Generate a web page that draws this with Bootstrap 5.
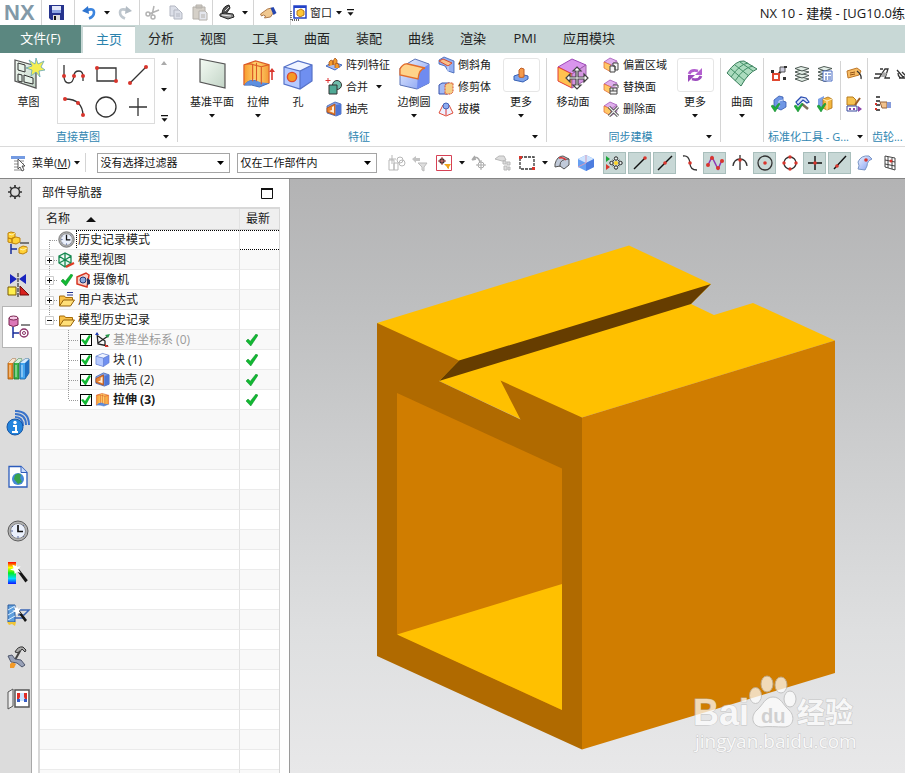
<!DOCTYPE html>
<html lang="zh-CN">
<head>
<meta charset="utf-8">
<meta name="viewport" content="width=device-width, initial-scale=1">
<title>NX 10 - 建模</title>
<link href="https://cdn.jsdelivr.net/npm/bootstrap@5.3.0/dist/css/bootstrap.min.css" rel="stylesheet">
<style>
body{font:11px/16px "Open Sans","Noto Sans CJK SC",sans-serif;color:#1a1a1a;background:#fff}
svg{display:block;flex:none;overflow:visible}
button{border:0;background:none;padding:0;color:inherit;font:inherit;line-height:16px;white-space:nowrap}
.ln{fill:none;stroke:#333;stroke-width:1.3}
.rd{fill:#d8352c}
.vsep{width:1px;background:#d4d4d4;flex:none;align-self:stretch}
.qbar{height:25px}
.logo{width:41px;padding-left:4px;font:bold 22px/26px "Liberation Sans",sans-serif;color:#8299a8}
.b24,.b28,.b25,.car{display:flex;align-items:center;justify-content:center;flex:none}
.b24{width:24px;height:24px}.b28{width:28px;height:24px}.b25{width:25px;height:24px}
.car{width:8px;height:16px}
.car.wide{width:11px}
.wintitle{font-size:13px}
.tabs{height:28px;background:#c8d8d6;font-size:13px}
.tabs a{color:#222;text-decoration:none;width:52px;text-align:center;line-height:27px;flex:none}
.tabs .file{width:81px;background:#5b8780;color:#fff;margin-right:2px;line-height:27px}
.tabs .on{background:#fff;color:#2a82ad;border-top:1px solid #b9c4c3;margin-top:1px;line-height:25px}
.tabs .apps{width:76px}
.ribbon{height:94px;border-bottom:1px solid #dadada}
.grp{display:flex;flex-direction:column;flex:none}
.grp>.body{height:75px;display:flex}
.grp>.cap{height:18px;color:#2f86b1;display:flex;align-items:center;justify-content:center;padding:0 8px;line-height:18px}
.ribbon>.vsep{margin:5px 0 4px}
.big{width:40px;padding-top:5px;display:flex;flex-direction:column;align-items:center}
.big.w52{width:52px}.big.w57{width:57px}.big.w42{width:42px}
.big.etc{margin:0 5px 0 10px}
.big>svg:first-child{width:32px;height:32px;margin-bottom:4px}
.big .dn{margin-top:4px}
.more{width:37px;height:34px;border:1px solid #e6e6e6;border-radius:3px;display:flex;align-items:center;justify-content:center;margin-bottom:2px}
.sm{display:flex;flex-direction:column;padding-top:1px}
.sm button{height:22px;display:flex;align-items:center;gap:4px}
.gallery{width:98px;height:66px;margin-top:5px;border:1px solid #dcdcdc;display:grid;grid-template-columns:repeat(3,1fr)}
.gallery button,.icons button{display:flex;align-items:center;justify-content:center}
.gscroll{width:18px;padding:8px 0 6px;display:flex;flex-direction:column;justify-content:space-between;align-items:center}
.icons{display:grid;grid-template-columns:repeat(3,23px);grid-template-rows:30px 30px;padding:6px 0 0 3px}
.icons.one{grid-template-columns:23px;padding-left:1px}
.selbar{height:32px;border-bottom:1px solid #858585}
.selbar .vsep{margin:6px 11px 6px 5px}
.selbar select{flex:none;width:133px;margin-right:7px;height:20px;border:1px solid #a5a5a5;border-radius:0;font-size:11px;line-height:18px;padding:0 20px 0 2px;color:#111;background:#fff url("data:image/svg+xml,%3Csvg xmlns='http://www.w3.org/2000/svg' width='7' height='4'%3E%3Cpath d='M0 0h7L3.5 4z'/%3E%3C/svg%3E") no-repeat right 5px center;appearance:none}
.selbar select.scope{width:140px}
.tg{width:23px;height:22px;background:#c8d8d6;border:1px solid #a9bfbc;display:flex;align-items:center;justify-content:center}
.side{width:32px;background:#dcdcdc;border-right:1px solid #a8a8a8}
.side button{height:42px;width:32px;flex:none;display:flex;align-items:center;justify-content:center;padding-left:4px}
.side .gear{height:26px;margin-bottom:17px;padding:0 2px 0 0}
.side .act{background:#fff;border:1px solid #b5b5b5;border-right:0;margin-left:2px;width:30px;padding-left:2px}
.side .gapt{margin-top:12px}
.nav-panel{width:258px;border-right:1px solid #9a9a9a}
.nav-panel h2{font-size:12px;line-height:28px;height:28px;margin:0;padding-left:10px;font-weight:400}
.treebox{margin:0 9px 0 6px;border:1px solid #d8d8d8;border-width:2px 1px 0 2px;font-size:12px}
.tree{width:100%;table-layout:fixed;border-collapse:separate;border-spacing:0}
.tree th{height:21px;background:#efefef;font-weight:400;border-bottom:1px solid #cfcfcf;padding:0 6px;line-height:20px}
.tree td{height:20px;padding:0;border-bottom:1px solid #ebebeb;line-height:19px;overflow:hidden;white-space:nowrap}
.tree th:first-child,.tree td:first-child{border-right:1px solid #e2e2e2}
.tree tbody tr:nth-child(even) td{background:#f9f9f9}
.tree .cell{display:flex;align-items:center;height:19px}
.tree .gut{width:18px;height:20px;margin-bottom:-1px}
.tree .gut.deep{width:38px}
.tree .dot{fill:none;stroke:#999;stroke-dasharray:1 1}
.tree .tx{padding-left:3px}
.tree .ok{margin:0 3px}
.tree td .new{margin-left:6px}
.tree .dim{color:#9b9b9b}
.tree .focus .tx{border:1px dotted #000;border-right:0;padding-left:1px;flex:1;height:20px;margin-left:1px;line-height:18px}
.tree .focus td:last-child{border-top:1px dotted #000;border-bottom:1px dotted #000}
.tree input{appearance:none;width:12px;height:12px;border:1px solid #000;margin:0 3px 0 2px;flex:none;background:#fff}
.tree input:checked{background:#fff url("data:image/svg+xml,%3Csvg xmlns='http://www.w3.org/2000/svg' viewBox='0 0 10 10'%3E%3Cpath d='M0 5l2-1 2 2 4-6 2 1-5 9H4z' fill='%2312b833'/%3E%3C/svg%3E") center/10px no-repeat}
.tree label{padding-left:3px}
.view{background:linear-gradient(#b3b3b4,#bdbebf 20%,#cecfd0 48%,#dedfe0 76%,#e8e8e9)}
.view svg{width:100%;height:100%}
.wm text{fill:#fff;stroke:#b9b9b9;stroke-width:1;paint-order:stroke}
</style>
<script src="https://cdn.jsdelivr.net/npm/bootstrap@5.3.0/dist/js/bootstrap.bundle.min.js"></script>
</head>
<body class="vh-100 overflow-hidden d-flex flex-column">
<svg width="0" height="0" class="position-absolute" aria-hidden="true">
<defs>
<linearGradient id="gb" x2="1" y2="1"><stop stop-color="#eef3ff"/><stop offset="1" stop-color="#7e9bf2"/></linearGradient>
<linearGradient id="gp" x2="1" y2="1"><stop stop-color="#f4fbf4"/><stop offset="1" stop-color="#c2d4c6"/></linearGradient>
<linearGradient id="go" x2="1" y2="0"><stop stop-color="#f79a2c"/><stop offset=".5" stop-color="#ffd873"/><stop offset="1" stop-color="#f49a35"/></linearGradient>
<linearGradient id="gr" x2="0" y2="1"><stop stop-color="red"/><stop offset=".25" stop-color="#ff0"/><stop offset=".5" stop-color="#0e2"/><stop offset=".75" stop-color="#0df"/><stop offset="1" stop-color="#11f"/></linearGradient>
<symbol id="dn" viewBox="0 0 6 4"><path d="M0 0h6L3 3.5z" fill="#111"/></symbol>
<symbol id="dnbar" viewBox="0 0 7 7"><path d="M0 0h7v1.3H0zM.5 3.3h6L3.500 6.800z" fill="#111"/></symbol>
<symbol id="ck" viewBox="0 0 12 12"><path d="M0 7l2-2 2.300 2.200L10 0l2 1.200L4.800 12z" fill="#12b833" stroke="#0a8d25" stroke-width=".5"/></symbol>
<symbol id="cube" viewBox="0 0 16 16"><path d="M1 4.500l7-3 7 2v8l-6 4-8-2.500z" fill="#6f8ff0"/><path d="M1 4.500l8 2v9l-8-2.500z" fill="#b5c9ff"/><path d="M1 4.500l7-3 7 2-6 3z" fill="#f0f4ff"/><path d="M1 4.500l7-3 7 2v8l-6 4-8-2.500zM1 4.500l8 2 6-3M9 6.500v9" fill="none" stroke="#5672c8" stroke-width=".6"/></symbol>
<symbol id="ext" viewBox="0 0 30 32"><path d="M2 28Q6 22 12 23h8l8 3-10 4q-8-3-16-2z" fill="#5d8fe0" stroke="#3d6ab8"/><path d="M2 7l12-4 14 4v19l-9-1-7-3q-7 1-10 6z" fill="url(#go)"/><path d="M2 28V7l12-4 14 4v19M2 7q6-2 10 0l8 2 8-2M11 7v17M15 5v19M20 9v18" fill="none" stroke="#dc5a26" stroke-width="1.200"/></symbol>
<symbol id="shell" viewBox="0 0 16 16"><path d="M1 5l8-4 6 2v10l-5 2-9-3z" fill="#86a5ec" stroke="#3d5fae" stroke-width=".8"/><path d="M1 7l8-4v11l-8-3z" fill="#e9812d" stroke="#a94b16" stroke-width=".8"/><path d="M3 10l3-1V6l2-1v7z" fill="#fff0dc"/><path d="M10 4l5-1v10l-5 2z" fill="#4f76d5"/></symbol>
<symbol id="fold" viewBox="0 0 16 16"><path d="M1 14V4h5l1 1.500h7V8" fill="#f9c24a" stroke="#a56b08"/><path d="M1 14L5 8h11l-4 6z" fill="#ffdf78" stroke="#94610a"/></symbol>
<symbol id="face" viewBox="0 0 16 16"><path d="M1 5l6-4 7 3-6 4z" fill="#dfb0ec" stroke="#a557bb" stroke-width=".8"/><path d="M1 5l7 3v7l-7-4z" fill="#ffc867" stroke="#e4703b" stroke-width=".8"/><path d="M8 8l6-4v7l-6 4z" fill="#d9a3e3" stroke="#a878b1" stroke-width=".6"/></symbol>
<symbol id="clock" viewBox="0 0 22 22"><circle cx="11" cy="11" r="10" fill="#b2b2b2" stroke="#5d5d5d"/><circle cx="11" cy="11" r="7.500" fill="#eaf0fc" stroke="#8a8a8a"/><path d="M11 5v6.500h5" fill="none" stroke="#111" stroke-width="1.700"/><path d="M11 16v2M4 11h2M16 16l1 1M5 16l1-1M5 6l1 1M16 6l1-1" stroke="#56669a"/></symbol>
<symbol id="wand" viewBox="0 0 16 16"><path d="M5 5l2-1 8 10-2 2z" fill="#161616"/><path d="M5 0l1 3 3-1-2 3 2 3-3-1-2 2-.5-3L0 5l3-1-1-3 3 1z" fill="#fff"/></symbol>
<symbol id="layers" viewBox="0 0 16 16"><g fill="#e4efe8" stroke="#3d4a44" stroke-width=".9"><path d="M1 13l6-2 8 2-7 2.500z"/><path d="M1 9.500l6-2 8 2-7 2.500z"/><path d="M1 6l6-2 8 2-7 2.500z"/><path d="M1 2.500l6-2 8 2L8 5z"/></g></symbol>
<symbol id="tick" viewBox="0 0 16 16"><path d="M0 10l2-1 2 2.500L8 7l1 1-5 8z" fill="#1fae3b" stroke="#118229" stroke-width=".5"/></symbol>
<symbol id="hand" viewBox="0 0 16 12"><path d="M0 7l7-5 4-1 3 3-4 6-6 1 1-2-2-1-2 1z" fill="#f0c890" stroke="#9c6130" stroke-width=".8"/><path d="M10 1l3-1 3 6-3 2z" fill="#2445ae"/></symbol>
</defs>
</svg>

<header class="qbar d-flex align-items-center flex-shrink-0">
<div class="logo flex-shrink-0">NX</div><span class="vsep"></span>
<button class="b28 me-1" aria-label="保存"><svg width="15" height="15"><path d="M0 0h15v15H2l-2-2z" fill="#26348e"/><path d="M3 1h9v7H3z" fill="#e4e8fa"/><path d="M3 5h9v3H3z" fill="#8da6e5"/><path d="M4 10h7v5H4z" fill="#ddd"/><path d="M5 11h2v4H5z" fill="#111"/></svg></button><span class="vsep"></span>
<button class="b28" aria-label="撤消"><svg width="14" height="15"><path d="M4 5.500q8-3 8 2 0 4-5 6" fill="none" stroke="#3b84df" stroke-width="2.600"/><path d="M0 6l6-5 1 8z" fill="#2f75d0"/></svg></button><button class="car" aria-label="撤消列表"><svg width="6" height="4"><use href="#dn"/></svg></button>
<button class="b28" aria-label="重做"><svg width="14" height="15"><path d="M10 5.500q-8-3-8 2 0 4 5 6" fill="none" stroke="#c0c8cf" stroke-width="2.600"/><path d="M14 6L8 1 7 9z" fill="#b3bcc4"/></svg></button><span class="vsep"></span>
<button class="b24" aria-label="剪切"><svg width="15" height="15" fill="none" stroke="#b3b3b3" stroke-width="1.500"><path d="M9 1L7 10M14 5L4 9"/><circle cx="3" cy="9" r="2"/><circle cx="8" cy="12" r="2"/></svg></button>
<button class="b24" aria-label="复制"><svg width="14" height="15" fill="#dcdfe8" stroke="#b3b7c2"><path d="M1 1h5l3 3v7H1z"/><path d="M5 5h5l3 3v6H5z"/><path d="M7 9h4M7 11h4"/></svg></button>
<button class="b24" aria-label="粘贴"><svg width="16" height="16" fill="#d5d0c8" stroke="#b4b0aa"><path d="M1 2h12v12H1zM4 0h6v3H4z"/><path d="M7 6h6l2 2v7H7z" fill="#e4e6ed"/><path d="M9 10h4M9 12h4"/></svg></button><span class="vsep"></span>
<button class="b28" aria-label="命令查找器"><svg width="16" height="15"><path d="M3 8Q4 1 10 0l1 3-4 6z" fill="#555" stroke="#222"/><path d="M6 6l4-4" stroke="#ddd"/><path d="M1 9l5-1 8 1 1 3-6 2-8-3z" fill="#888" stroke="#222"/><path d="M3 10l9 1" stroke="#eee"/></svg></button><button class="car me-1" aria-label="更多命令"><svg width="6" height="4"><use href="#dn"/></svg></button><span class="vsep"></span>
<button class="b28 me-2" aria-label="触控"><svg width="17" height="12"><use href="#hand"/></svg></button><span class="vsep"></span>
<button class="d-flex align-items-center"><svg width="15" height="16" class="me-1"><path d="M3 1h12v12H3z" fill="#fff" stroke="#2342c8" stroke-width="1.500"/><path d="M3 1h12v2H3z" fill="#2342c8"/><path d="M0 6v9h9" class="ln" stroke-dasharray="1 1"/><path d="M6 6l4-2 3 2v4l-4 2-3-2z" fill="#ffc636" stroke="#b47616"/></svg>窗口<svg width="6" height="4" class="mx-1"><use href="#dn"/></svg></button><button class="car" aria-label="自定义"><svg width="7" height="7"><use href="#dnbar"/></svg></button>
<div class="wintitle text-nowrap ms-auto">NX 10 - 建模 - [UG10.0练</div>
</header>

<nav class="tabs d-flex flex-shrink-0 overflow-hidden">
<a href="#" class="file">文件(F)</a><a href="#" class="on">主页</a><a href="#">分析</a><a href="#">视图</a><a href="#">工具</a><a href="#">曲面</a><a href="#">装配</a><a href="#">曲线</a><a href="#">渲染</a><a href="#">PMI</a><a href="#" class="apps">应用模块</a>
</nav>

<section class="ribbon d-flex flex-shrink-0 overflow-hidden">
<div class="grp"><div class="body">
<button class="big w57"><svg viewBox="0 0 32 32"><path d="M2 2l21 6v22L2 23z" fill="url(#gp)" stroke="#555" stroke-width="1.300"/><path d="M5 5l7 2v7l-7-2zM5 16l4 1v7l-4-1zM11 17l9 3v6l-9-2z" fill="#e7f3ea" stroke="#333"/><path d="M23 0l2 6 6-3-3 6 4 3-6 1 1 6-4-5-5 4 1-6-6-2 6-2-3-6 6 4z" fill="#f5ee51" stroke="#62a6b8" stroke-width=".8"/></svg>草图</button>
<div class="gallery">
<button aria-label="轮廓"><svg width="22" height="20"><path d="M1 0v11q0 7 5 7 4 0 5-7 0-5 5-5 4 0 4 6v4" class="ln"/><g class="rd"><circle cx="1" cy="11" r="2"/><circle cx="11" cy="11" r="2"/><circle cx="20" cy="11" r="2"/></g></svg></button>
<button aria-label="矩形"><svg width="22" height="18"><path d="M2 2h19v13H2z" class="ln"/><g class="rd"><circle cx="2" cy="2" r="2"/><circle cx="21" cy="15" r="2"/></g></svg></button>
<button aria-label="直线"><svg width="20" height="18"><path d="M2 17L18 1" class="ln"/><g class="rd"><circle cx="2" cy="17" r="2"/><circle cx="18" cy="1" r="2"/></g></svg></button>
<button aria-label="圆弧"><svg width="22" height="20"><path d="M2 2q18 0 18 17" class="ln"/><g class="rd"><circle cx="2" cy="2" r="2"/><circle cx="15" cy="6" r="2"/><circle cx="20" cy="18" r="2"/></g></svg></button>
<button aria-label="圆"><svg width="22" height="22"><circle cx="11" cy="11" r="10" class="ln"/></svg></button>
<button aria-label="点"><svg width="18" height="18"><path d="M9 0v18M0 9h18" class="ln"/></svg></button>
</div>
<div class="gscroll"><button class="lh-1" aria-label="上"><svg width="6" height="4"><path d="M0 4h6L3 0z" fill="#aaa"/></svg></button><button class="lh-1" aria-label="下"><svg width="6" height="4"><use href="#dn"/></svg></button><button class="lh-1" aria-label="全部"><svg width="7" height="7"><use href="#dnbar"/></svg></button></div>
<span class="pe-1"></span></div>
<div class="cap justify-content-between ps-0"><span class="ps-5 ms-2">直接草图</span><svg width="6" height="4"><use href="#dn"/></svg></div></div>
<span class="vsep"></span>

<div class="grp"><div class="body ps-2">
<button class="big w52"><svg viewBox="0 0 32 32"><path d="M4 1l25 5v24L4 24z" fill="url(#gp)" stroke="#555" stroke-width="1.200"/></svg>基准平面<svg width="6" height="4" class="dn"><use href="#dn"/></svg></button>
<button class="big"><svg viewBox="0 0 32 32"><use href="#ext" width="29" height="31"/><path d="M30 22V13" stroke="#d92820" stroke-width="1.500"/><path d="M27 14l3-4 3 4z" class="rd"/></svg>拉伸<svg width="6" height="4" class="dn"><use href="#dn"/></svg></button>
<button class="big"><svg viewBox="0 0 16 16"><use href="#cube"/><circle cx="5" cy="9.500" r="2.300" fill="#f59a25" stroke="#dc4a30" stroke-width=".7"/></svg>孔</button>
<div class="sm ps-2">
<button><svg width="16" height="16" viewBox="0 0 16 16"><path d="M0 9l7-4 9 3-7 5z" fill="#aabdf0" stroke="#446abe"/><path d="M3 9V5l2-2 2 1v4M7 8V4l2-3 2 2v4M9 11V7l2-1 2 2v3" fill="#f59b2b" stroke="#a55520" stroke-width=".8"/></svg>阵列特征</button>
<button><svg width="16" height="16" viewBox="0 0 16 16"><circle cx="11" cy="6" r="4.500" fill="#70bdab" stroke="#333"/><path d="M3 6h8v9H3z" fill="#50a995" stroke="#333"/><path d="M2-1v5M-.5 1.500h5" stroke="#d33"/></svg>合并<svg width="6" height="4" class="ms-1"><use href="#dn"/></svg></button>
<button><svg width="16" height="16"><use href="#shell"/></svg>抽壳</button></div>
<button class="big ms-1"><svg viewBox="0 0 32 32"><path d="M2 10L17 1l14 5v19l-12 6-17-4z" fill="url(#gb)" stroke="#5b74b8"/><path d="M20 14l11-8v19l-12 6z" fill="#6f8bf0"/><path d="M2 17V11q3-6 8-5l17 4q-6 1-7 11z" fill="#ffd38a" stroke="#e26c2b" stroke-width="1.300"/></svg>边倒圆<svg width="6" height="4" class="dn"><use href="#dn"/></svg></button>
<div class="sm ps-1">
<button><svg width="16" height="16" viewBox="0 0 16 16"><path d="M1 3l5-3 10 4v12l-6-2-3-5-6-2z" fill="#94aff0" stroke="#3b60b2" stroke-width=".8"/><path d="M1 4l4-2 9 4-4 3z" fill="#f9c189" stroke="#d74a30"/><path d="M10 9v6" stroke="#d9e4ff"/></svg>倒斜角</button>
<button><svg width="16" height="16" viewBox="0 0 16 16"><path d="M1 6l3-2h8v9l-2 2H1z" fill="#a4baf5" stroke="#3653ac"/><path d="M7 6l3-2h5v9l-2 2H7z" fill="#f4cf87" stroke="#d74a30" stroke-dasharray="2 1"/></svg>修剪体</button>
<button><svg width="16" height="16" viewBox="0 0 16 16"><path d="M1 12l4-8h6l4 8-7 3z" fill="#eef1ff" stroke="#e04c38"/><path d="M8 3v11" stroke="#d33"/><circle cx="8" cy="5" r="3" fill="#8eacef" stroke="#4463ba"/></svg>拔模</button></div>
<button class="big etc"><span class="more"><svg width="16" height="16" viewBox="0 0 16 16"><path d="M1 9l6-2 8 2v3l-5 3-9-2z" fill="#7ea3ea" stroke="#3560b5"/><path d="M6 10V3l2-2 3 1v8q-3 1-5 0z" fill="#f49a4b" stroke="#c25e25"/></svg></span>更多<svg width="6" height="4" class="dn"><use href="#dn"/></svg></button></div>
<div class="cap"><span class="ms-auto">特征</span><svg width="6" height="4" class="ms-auto"><use href="#dn"/></svg></div></div>
<span class="vsep"></span>

<div class="grp"><div class="body">
<button class="big w52"><svg viewBox="0 0 32 32"><path d="M1 9l14-8 14 6-14 9z" fill="#d995ec" stroke="#9e49ba"/><path d="M1 9l14 7v14L1 23z" fill="#ffc14f" stroke="#e23c35"/><path d="M15 16l14-9v15l-14 8z" fill="#d496e1" stroke="#9e61aa"/><path d="M20 9l4 4h-3v6h6v-3l4 4-4 4v-3h-6v6h3l-4 4-4-4h3v-6h-6v3l-4-4 4-4v3h6v-6h-3z" fill="#fff" stroke="#444" stroke-width="1.200"/></svg>移动面</button>
<div class="sm ps-1">
<button><svg width="16" height="16" viewBox="0 0 16 16"><use href="#face"/><path d="M7 9h5v6H7zM10 6h5v7h-3V9h-2z" fill="#f4f4f4" stroke="#444"/></svg>偏置区域</button>
<button><svg width="16" height="16" viewBox="0 0 16 16"><use href="#face"/><path d="M7 9h7v6H7zM7 12h7M10 6h5v3M10 9v3" fill="#f4f4f4" stroke="#444"/></svg>替换面</button>
<button><svg width="16" height="16" viewBox="0 0 16 16"><use href="#face"/><path d="M6 6l9 9M15 6l-9 9" stroke="#444" stroke-width="3"/><path d="M6 6l9 9M15 6l-9 9" stroke="#eee" stroke-width="1.200"/></svg>删除面</button></div>
<button class="big etc ms-2"><span class="more"><svg width="16" height="14"><path d="M2 6q2-5 9-3" fill="none" stroke="#b35fcf" stroke-width="2.800"/><path d="M8 7h7V0z" fill="#b35fcf"/><path d="M14 8q-2 5-9 3" fill="none" stroke="#9c4bbd" stroke-width="2.800"/><path d="M8 7H1v7z" fill="#9c4bbd"/></svg></span>更多<svg width="6" height="4" class="dn"><use href="#dn"/></svg></button></div>
<div class="cap"><span class="ms-auto">同步建模</span><svg width="6" height="4" class="ms-auto"><use href="#dn"/></svg></div></div>
<span class="vsep"></span>

<div class="grp"><div class="body"><button class="big w42"><svg viewBox="0 0 32 32"><path d="M1 15Q10 2 18 3l13 8q-9 4-16 17z" fill="#acdcbf" stroke="#397e5c"/><path d="M5 11l14 12M9 7l14 11M14 4l13 9M5 19Q14 6 22 5M9 23Q18 9 27 8" fill="none" stroke="#438f67"/></svg>曲面<svg width="6" height="4" class="dn"><use href="#dn"/></svg></button></div></div>
<span class="vsep"></span>

<div class="grp"><div class="body">
<div class="icons">
<button aria-label="装配关系"><svg width="16" height="16" viewBox="0 0 16 16"><path d="M5 11L11 4" stroke="#222" stroke-width="2"/><path d="M2 8h6v6H2z" fill="#fff" stroke="#e04931" stroke-width="2"/><path d="M9 1h5v5H9z" fill="#ccd" stroke="#555"/><path d="M0 4h3v3H0zM12 11h3v3h-3zM13 0h3v2h-3z" fill="#333"/></svg></button>
<button aria-label="图层"><svg width="16" height="16"><use href="#layers"/></svg></button>
<button aria-label="图层表"><svg width="16" height="16" viewBox="0 0 16 16"><use href="#layers"/><path d="M6 5h9v10H6z" fill="#fff" stroke="#4d6fc5"/><path d="M8 8h2M11 8h3M8 11h2M11 11h3M8 13h2M11 13h3" stroke="#315abd"/></svg></button>
<button aria-label="检查"><svg width="16" height="16" viewBox="0 0 16 16"><path d="M3 4l5-4 4 1v4l3 1v5l-5 3-7-3z" fill="#6f96e4" stroke="#3559ae" stroke-width=".8"/><path d="M8 5l4-1M8 5v6" stroke="#d4e0fa"/><use href="#tick"/></svg></button>
<button aria-label="检查工具"><svg width="16" height="16" viewBox="0 0 16 16"><path d="M2 6l5-5 5 1 3 4-2 1-4-3-5 5z" fill="#dfe7fb" stroke="#284bb0" stroke-width="1.200"/><path d="M8 8l6 5" stroke="#807159" stroke-width="2.500"/><use href="#tick"/></svg></button>
<button aria-label="部件检查"><svg width="16" height="16" viewBox="0 0 16 16"><path d="M1 3l6-3v10l-6 2z" fill="#7fa2e6"/><path d="M6 3l5-2 4 2v9l-5 2-4-2z" fill="#f4b63e" stroke="#aa6e18" stroke-width=".8"/><path d="M6 3l4 2 5-2M10 5v9" fill="none" stroke="#fff0c0"/><use href="#tick"/></svg></button>
</div>
<span class="vsep my-2 ms-1"></span>
<div class="icons one">
<button aria-label="标签"><svg width="16" height="16" viewBox="0 0 16 16"><path d="M1 5l10-3 4 3-2 4-11 3z" fill="#f7bb63" stroke="#be7728"/><path d="M4 7l5-1M4 9l5-1" stroke="#915217"/><path d="M11 5q5 4 4 8" class="ln"/></svg></button>
<button aria-label="编辑属性"><svg width="16" height="16" viewBox="0 0 16 16"><path d="M1 1h6l3 3v5H1z" fill="#f6c251" stroke="#b77b1c"/><path d="M1 10h10v5H1z" fill="#fff" stroke="#34469b"/><path d="M3 12h2v2H3zM7 12h2v2H7zM12 10l4 3-4 3z" fill="#8a43ab"/><path d="M9 9l5-7" stroke="#9b5c24" stroke-width="2"/></svg></button></div></div>
<div class="cap px-1 justify-content-start gap-2"><span class="me-auto">标准化工具 - G...</span><svg width="6" height="4"><use href="#dn"/></svg></div></div>
<span class="vsep"></span>

<div class="grp"><div class="body"><div class="icons">
<button aria-label="齿轮建模"><svg width="16" height="14" viewBox="0 0 16 14"><path d="M0 11h5L11 2h3l-3 9h5M1 7h6M9 2H6" class="ln"/><path d="M9 5l4 1-2 4H7z" fill="#aaa"/></svg></button>
<button aria-label="齿轮啮合"><svg width="16" height="14" viewBox="0 0 16 14"><path d="M0 3l6 7 8-8M2 11h9L5 5M1 6q0 6 7 5" class="ln"/></svg></button><span></span>
<button aria-label="弹簧"><svg width="17" height="16" viewBox="0 0 17 16"><path d="M2 1h4M2 5h4M2 9h4M2 14h4" stroke="#222" stroke-width="1.500"/><path d="M1 7h2v2H1zM1 12h2v2H1z" class="rd"/><path d="M6 6h7v6H8z" fill="#f1c28d" stroke="#95623b"/><path d="M13 6h4v6h-4z" fill="#879cda"/></svg></button></div></div>
<div class="cap justify-content-start px-1 gap-2"><span>齿轮...</span></div></div>
</section>

<section class="selbar d-flex align-items-center flex-shrink-0 overflow-hidden">
<button class="d-flex align-items-center ps-2 flex-shrink-0"><svg width="20" height="16" viewBox="0 0 18 16"><path d="M2 1h14v3H2z" fill="#749be2"/><path d="M5 6h10M5 9h10M5 12h10M5 15h9" stroke="#888"/><path d="M9 4v10l2-2 2 4 2-1-2-4h3z" fill="#fff" stroke="#333" stroke-width=".8"/></svg><span class="ms-1 me-1">菜单(<u>M</u>)</span><svg width="6" height="4"><use href="#dn"/></svg></button>
<span class="vsep"></span>
<select aria-label="类型过滤器"><option>没有选择过滤器</option></select>
<select class="scope" aria-label="选择范围"><option>仅在工作部件内</option></select>
<button class="b24" aria-label="部件"><svg width="17" height="16" fill="none" stroke="#b7b7b7"><path d="M1 5h5v10H1zM6 8h4v7H6zM4 0v9M1 4h7"/><circle cx="12" cy="5" r="3"/><circle cx="14" cy="8" r="3"/></svg></button>
<button class="b24" aria-label="过滤"><svg width="16" height="16"><path d="M0 4l4-3v2h4v3H4v2z" fill="#c3c3c3"/><path d="M6 8h9l-3 4v4l-2-1v-3z" fill="#ddd" stroke="#bbb"/></svg></button>
<button class="b24" aria-label="常规选择过滤器"><svg width="16" height="16"><path d="M.5.500h15v15H.5z" fill="#fff" stroke="#d64155"/><circle cx="6" cy="6" r="2" class="ln"/><path d="M6 2v8M2 6h8" stroke="#933"/><path d="M8 9h7l-2 3v2l-2-1v-1z" fill="#f0a51c"/></svg></button><button class="car wide" aria-label="过滤器列表"><svg width="6" height="4"><use href="#dn"/></svg></button>
<button class="b24" aria-label="重置"><svg width="16" height="16" fill="none" stroke="#aaa"><path d="M1 5l3-4M1 5l4-1M2 4q5-4 7 3" stroke-width="1.500"/><circle cx="10" cy="10" r="3"/><path d="M10 5v10M5 10h10"/></svg></button>
<button class="b24" aria-label="查找"><svg width="16" height="16" fill="#ddd" stroke="#b9b9b9"><path d="M0 4l4-3h5l2 4-4 1zM8 6h3v3H8zM12 7h3v3h-3zM9 11h3v4H9zM13 12h2v3h-2z"/></svg></button>
<button class="b24" aria-label="矩形选择"><svg width="16" height="14"><path d="M1 1h14v12H1z" class="ln" stroke-dasharray="3 1"/><g class="rd"><path d="M0 0h3v3H0zM13 11h3v3h-3z"/></g></svg></button><button class="car wide" aria-label="选择方式"><svg width="6" height="4"><use href="#dn"/></svg></button>
<button class="b24" aria-label="高亮"><svg width="16" height="15"><path d="M1 9q2-8 8-8l6 3v6l-5 4-4-3-5 1z" fill="#c1cad9" stroke="#555"/><path d="M6 10q0-6 9-6M6 10v2" fill="none" stroke="#555"/><path d="M5 3q5-1 7 2" fill="none" stroke="#d33" stroke-width="1.500"/></svg></button>
<button class="b24 me-1" aria-label="着色"><svg width="16" height="16"><path d="M0 4l8-4 8 4v8l-8 4-8-4z" fill="#67a0f3"/><path d="M0 4l8-4 8 4-8 4z" fill="#cfe4ff"/><path d="M8 8l8-4v8l-8 4z" fill="#4d7ddf"/><path d="M8 0v8L0 12" stroke="#d59bb8" fill="none"/></svg></button>
<button class="b25" aria-label="启用捕捉点"><span class="tg"><svg width="17" height="14"><path d="M0 0l4 3-4 3z" fill="#1ba637"/><path d="M0 8l4 3-4 3z" class="rd"/><g fill="#e8eeee" stroke="#222"><circle cx="10" cy="2.500" r="1.700"/><circle cx="10" cy="11.500" r="1.700"/><circle cx="5.500" cy="7" r="1.700"/><circle cx="14.500" cy="7" r="1.700"/><path d="M6.500 4l1.500 1M13.500 4L12 5M6.500 10L8 9M13.500 10L12 9"/></g><circle cx="10" cy="7" r="2" fill="#ffd426"/></svg></span></button>
<button class="b25" aria-label="端点"><span class="tg"><svg width="14" height="14"><path d="M1 13L12 2" stroke="#111" stroke-width="1.400"/><circle cx="12" cy="2" r="1.800" class="rd"/></svg></span></button>
<button class="b25" aria-label="中点"><span class="tg"><svg width="14" height="14"><path d="M0 14L14 0" stroke="#111" stroke-width="1.400"/><circle cx="7" cy="7" r="1.800" class="rd"/></svg></span></button>
<button class="b25" aria-label="控制点"><svg width="14" height="14"><path d="M0 0q6-1 7 7 0 7 7 7" class="ln"/><circle cx="7" cy="7" r="1.800" class="rd"/></svg></button>
<button class="b25" aria-label="极点"><span class="tg"><svg width="16" height="14"><path d="M1 9L5 1l6 12 4-9" fill="none" stroke="#8e37b5" stroke-width="1.500"/><g class="rd"><circle cx="1" cy="9" r="2"/><circle cx="5" cy="2" r="2"/><circle cx="11" cy="12" r="2"/><circle cx="15" cy="5" r="2"/></g></svg></span></button>
<button class="b25" aria-label="交点"><svg width="16" height="15"><path d="M8 0v15M1 11q1-7 7-7t7 7" class="ln"/><circle cx="8" cy="5" r="1.800" class="rd"/></svg></button>
<button class="b25" aria-label="圆心"><span class="tg"><svg width="16" height="16"><circle cx="8" cy="8" r="7" class="ln"/><circle cx="8" cy="8" r="1.800" class="rd"/></svg></span></button>
<button class="b25" aria-label="象限点"><svg width="16" height="16"><circle cx="8" cy="8" r="6" class="ln"/><g class="rd"><circle cx="8" cy="2" r="1.700"/><circle cx="8" cy="14" r="1.700"/><circle cx="2" cy="8" r="1.700"/><circle cx="14" cy="8" r="1.700"/></g></svg></button>
<button class="b25" aria-label="现有点"><span class="tg"><svg width="14" height="14"><path d="M7 0v14M0 7h14" stroke="#111" stroke-width="1.400"/><circle cx="7" cy="7" r="1.800" class="rd"/></svg></span></button>
<button class="b25" aria-label="曲线上的点"><span class="tg"><svg width="14" height="14"><path d="M1 13L13 0" stroke="#111" stroke-width="1.400"/><circle cx="4" cy="10" r="1.800" class="rd"/></svg></span></button>
<button class="b25" aria-label="面上的点"><svg width="16" height="16"><path d="M1 7q3-7 11-6l3 3q-5 2-5 7l-2 4-7-1q2-3 0-7z" fill="url(#gb)" stroke="#7895c5"/><circle cx="9" cy="5" r="1.800" class="rd"/></svg></button>
<button class="b25" aria-label="网格点"><svg width="12" height="14"><path d="M1 0l10 2v12L1 11zM4 1v11M8 2v11M1 4l10 2M1 8l10 2" fill="none" stroke="#444"/><circle cx="7" cy="5" r="1.500" class="rd"/></svg></button>
</section>

<main class="d-flex flex-fill overflow-hidden">
<aside class="side d-flex flex-column flex-shrink-0">
<button class="gear" aria-label="选项"><svg width="14" height="14" viewBox="0 0 14 14"><circle cx="7" cy="7" r="4.500" fill="none" stroke="#333" stroke-width="1.500"/><path d="M7 0v2M7 12v2M0 7h2M12 7h2M2 2l2 2M10 10l2 2M2 12l2-2M10 4l2-2" stroke="#333" stroke-width="1.700"/></svg></button>
<button aria-label="装配导航器"><svg width="22" height="24"><g fill="#ffd136" stroke="#bf820b"><path d="M1 2l3-1 4 1v4l-3 2-4-1zM1 7l4 1v4l-4-1zM5 7l4-1 4 1v4l-4 2-4-1zM12 17l4-2 4 1v5l-4 2-4-1z"/></g><path d="M2 3l3 1 3-2M13 18l3 1 4-2" fill="none" stroke="#fff2b0"/><path d="M13 12h9" stroke="#111"/><path d="M4 13v10M4 18h6" stroke="#172c9b" stroke-width="1.500"/></svg></button>
<button aria-label="约束导航器"><svg width="22" height="24"><path d="M3 1l7 5-7 5zM19 1l-7 5 7 5z" fill="#1924bf"/><path d="M11 0v24" stroke="#111" stroke-dasharray="4 1"/><path d="M1 14h8v8H1z" fill="#fff04e" stroke="#7a5a00"/><path d="M13 13v9h9z" fill="#d8211e" stroke="#710e0c"/></svg></button>
<button class="act" aria-label="部件导航器"><svg width="22" height="24"><path d="M1 3v7q4 3 9 0V3" fill="#dc77b8" stroke="#78244f"/><ellipse cx="5.500" cy="3" rx="4.500" ry="2" fill="#f6c8e5" stroke="#78244f"/><path d="M13 10h9" stroke="#111"/><path d="M5 12v11M5 18h6" stroke="#172c9b" stroke-width="1.500"/><circle cx="16" cy="18" r="4" fill="#fff" stroke="#8b3268" stroke-width="1.400"/><circle cx="16" cy="18" r="1.500" fill="none" stroke="#8b3268"/></svg></button>
<button aria-label="重用库"><svg width="23" height="22"><path d="M1 5l4-4h4L6 5v16H1z" fill="#e98a25" stroke="#9d5512" stroke-width=".8"/><path d="M7 5l4-4h4l-3 4v16H7z" fill="#3ab649" stroke="#177128" stroke-width=".8"/><path d="M13 5l5-4h4v14l-4 6h-5z" fill="#42a4ee" stroke="#135e9d" stroke-width=".8"/><path d="M18 5l4-4v14l-4 6z" fill="#1f6fc0"/><path d="M1 5l4-4h4L6 5zM7 5l4-4h4l-3 4zM13 5l5-4h4l-4 4z" fill="#fff" fill-opacity=".8"/><path d="M3 7v12M9 7v12M15 7v12" stroke="#fff" stroke-opacity=".7"/></svg></button>
<button class="gapt" aria-label="HD3D 工具"><svg width="24" height="26" viewBox="0 0 24 26"><path d="M9 7q8 0 8 9M9 4q11 0 11 11M9 1q14 0 14 14" fill="none" stroke="#3973ca" stroke-width="2"/><circle cx="9" cy="17" r="8" fill="#2384dd" stroke="#1655a4"/><path d="M7 16h3v6M6 22h6" fill="none" stroke="#fff" stroke-width="2"/><circle cx="9" cy="12.500" r="1.700" fill="#fff"/></svg></button>
<button class="gapt" aria-label="Web 浏览器"><svg width="20" height="22"><path d="M1 .5h12l6 6V21H1z" fill="#fff" stroke="#2c5cbc" stroke-width="1.300"/><path d="M13 .5v6h6" fill="#cbdcfa" stroke="#2c5cbc"/><circle cx="10" cy="13" r="6" fill="#4388d6"/><path d="M7 9q4-3 6 0l-1 3 2 4-4 2-4-5z" fill="#38a34a"/></svg></button>
<button class="gapt" aria-label="历史记录"><svg width="22" height="22"><use href="#clock"/></svg></button>
<button aria-label="系统材料"><svg width="22" height="22"><path d="M1 0h8v22H1z" fill="url(#gr)"/><use href="#wand" x="3" width="19" height="22"/></svg></button>
<button aria-label="加工向导"><svg width="23" height="22"><path d="M1 1h7v17H1z" fill="#5f9fdd" stroke="#2b5a9c"/><path d="M1 6l7-4M1 11l7-4M1 16l7-4" stroke="#e1f0ff"/><path d="M8 6h14l-5 5h-6M8 14h10" fill="none" stroke="#3a65b5" stroke-width="1.500"/><path d="M0 18l2 3 3-1 3 2 1-4" fill="#f0c436"/><use href="#wand" x="5" width="16" height="20"/></svg></button>
<button aria-label="角色"><svg width="20" height="22"><path d="M7 6q3-6 8-5l3 3-1 2-3-3-3 4z" fill="#aaa" stroke="#333"/><path d="M12 5l-5 9" stroke="#444" stroke-width="2"/><path d="M0 10l4-1 3 4 6 1 4 5-3 2-5-4-6-1z" fill="#98a1b7" stroke="#4e566c"/><path d="M2 18q2-3 6 0l-2 4H2z" fill="#f39a28"/></svg></button>
<button aria-label="系统场景"><svg width="23" height="20"><path d="M1 3l5-3v17l-5 3z" fill="#eee" stroke="#555"/><path d="M8 1h14v17H8z" fill="#fff" stroke="#555" stroke-width="1.500"/><path d="M10 4h10v8H10z" fill="#df2c26"/><path d="M13 4h4v4l2 4h-8l2-4z" fill="#cbe4ff"/><path d="M10 10h3v3h-3zM17 10h3v3h-3z" fill="#365bc5"/></svg></button>
</aside>

<section class="nav-panel d-flex flex-column flex-shrink-0 bg-white">
<div class="d-flex align-items-center justify-content-between pe-3"><h2>部件导航器</h2><button aria-label="最大化"><svg width="12" height="11"><path d="M.5 1h11v9.500H.5z" fill="none" stroke="#111"/><path d="M0 1h12" stroke="#111" stroke-width="2"/></svg></button></div>
<div class="treebox flex-fill overflow-hidden">
<table class="tree">
<colgroup><col><col style="width:39px"></colgroup>
<thead><tr><th><span class="d-flex align-items-center">名称<svg width="10" height="5" class="ms-3"><path d="M0 5h10L5 0z" fill="#111"/></svg></span></th><th>最新</th></tr></thead>
<tbody>
<tr class="focus"><td><div class="cell"><svg class="gut"><path class="dot" d="M9.500 10v10M10 10.500h8"/></svg><svg width="17" height="17"><use href="#clock"/></svg><span class="tx">历史记录模式</span></div></td><td></td></tr>
<tr><td><div class="cell"><svg class="gut"><path class="dot" d="M9.500 0v20M14 10.500h4"/><path d="M5.500 6.500h8v8h-8z" fill="#fff" stroke="#ccc"/><path d="M7 10.500h5M9.500 8v5" stroke="#111"/></svg><svg width="17" height="16"><path d="M1 4l6-3 6 3v7l-6 4-6-4zM1 4l6 4 6-4M7 1v14M1 11l6-3 6 3" fill="#e6f7ef" stroke="#15874f" stroke-width="1.300"/><path d="M8 15l8-4" stroke="#e03a22" stroke-width="2"/></svg><span class="tx">模型视图</span></div></td><td></td></tr>
<tr><td><div class="cell"><svg class="gut"><path class="dot" d="M9.500 0v20M14 10.500h4"/><path d="M5.500 6.500h8v8h-8z" fill="#fff" stroke="#ccc"/><path d="M7 10.500h5M9.500 8v5" stroke="#111"/></svg><svg width="12" height="12" class="ok"><use href="#ck"/></svg><svg width="14" height="14"><path d="M1 4l9-4 3 2-2 12-10-3z" fill="#f8cfc7" stroke="#d63522" stroke-width="1.500"/><circle cx="7" cy="7" r="3" fill="#8da8dc" stroke="#243a77"/><path d="M11 5l3 2v4l-3 1z" fill="#25305d"/></svg><span class="tx">摄像机</span></div></td><td></td></tr>
<tr><td><div class="cell"><svg class="gut"><path class="dot" d="M9.500 0v20M14 10.500h4"/><path d="M5.500 6.500h8v8h-8z" fill="#fff" stroke="#ccc"/><path d="M7 10.500h5M9.500 8v5" stroke="#111"/></svg><svg width="17" height="16" viewBox="0 0 17 16"><use href="#fold" width="17" height="16"/><path d="M9 .5h6M9 3h6" stroke="#22338e"/></svg><span class="tx">用户表达式</span></div></td><td></td></tr>
<tr><td><div class="cell"><svg class="gut"><path class="dot" d="M9.500 0v10M14 10.500h4"/><path d="M5.500 6.500h8v8h-8z" fill="#fff" stroke="#ccc"/><path d="M7 10.500h5" stroke="#111"/></svg><svg width="17" height="16"><use href="#fold"/></svg><span class="tx">模型历史记录</span></div></td><td></td></tr>
<tr><td><div class="cell"><svg class="gut deep"><path class="dot" d="M28.500 0v20M29 10.500h9"/></svg><input type="checkbox" id="f0" checked><svg width="15" height="16"><path d="M2 1l1 11 10 2M3 11l10-7M3 4l7 5v5" fill="none" stroke="#222" stroke-width="1.300"/><path d="M10 3l5-1-2 4z" fill="#23984a"/><path d="M10 12l4 3h-4z" class="rd"/><path d="M0 3l2-3 2 3z" fill="#2340b5"/></svg><label for="f0" class="dim">基准坐标系 (0)</label></div></td><td><svg width="12" height="12" class="new"><use href="#ck"/></svg></td></tr>
<tr><td><div class="cell"><svg class="gut deep"><path class="dot" d="M28.500 0v20M29 10.500h9"/></svg><input type="checkbox" id="f1" checked><svg width="15" height="15"><use href="#cube"/></svg><label for="f1">块 (1)</label></div></td><td><svg width="12" height="12" class="new"><use href="#ck"/></svg></td></tr>
<tr><td><div class="cell"><svg class="gut deep"><path class="dot" d="M28.500 0v20M29 10.500h9"/></svg><input type="checkbox" id="f2" checked><svg width="15" height="15"><use href="#shell"/></svg><label for="f2">抽壳 (2)</label></div></td><td><svg width="12" height="12" class="new"><use href="#ck"/></svg></td></tr>
<tr><td><div class="cell"><svg class="gut deep"><path class="dot" d="M28.500 0v10M29 10.500h9"/></svg><input type="checkbox" id="f3" checked><svg width="15" height="15"><use href="#ext"/></svg><label for="f3" class="fw-bold">拉伸 (3)</label></div></td><td><svg width="12" height="12" class="new"><use href="#ck"/></svg></td></tr>
<tr><td></td><td></td></tr><tr><td></td><td></td></tr><tr><td></td><td></td></tr><tr><td></td><td></td></tr><tr><td></td><td></td></tr><tr><td></td><td></td></tr>
<tr><td></td><td></td></tr><tr><td></td><td></td></tr><tr><td></td><td></td></tr><tr><td></td><td></td></tr><tr><td></td><td></td></tr><tr><td></td><td></td></tr>
<tr><td></td><td></td></tr><tr><td></td><td></td></tr><tr><td></td><td></td></tr><tr><td></td><td></td></tr><tr><td></td><td></td></tr><tr><td></td><td></td></tr><tr><td></td><td></td></tr>
</tbody></table></div>
</section>

<section class="view flex-fill overflow-hidden">
<svg viewBox="290 179 615 594" preserveAspectRatio="xMidYMid meet" role="img" aria-label="模型">
<path d="M377 323L629 245.500 711 284 691 304 714 315 753 303 835 340.500 582 417.500 520 419 439 381z" fill="#ffc000"/>
<path d="M711 284L459 360.500 439 381 691 304z" fill="#663d00"/>
<path d="M377 323L459 360.500 439 381 520.500 419.500 500.500 380.500 582 417.500V749.500L377 656z" fill="#b06a00"/>
<path d="M582 417.500L835 340.500V673L582 749.500z" fill="#d07d00"/>
<path d="M397 393L562 468.500V710L397 634z" fill="#d07d00"/>
<path d="M397 634.500L562 584V710z" fill="#ffc000"/>
<g class="wm" opacity=".72">
<text x="693" y="725" font-family="Liberation Sans" font-weight="bold" font-size="36">Bai</text>
<g fill="#fff" stroke="#b9b9b9"><ellipse cx="755.500" cy="695.500" rx="6" ry="8"/><ellipse cx="767" cy="684" rx="6" ry="8"/><ellipse cx="781" cy="685" rx="6" ry="8"/><ellipse cx="790" cy="699" rx="6" ry="8"/><path d="M773 697c8 0 10 8 16 13 7 7 4 17-5 17-7 0-16-1-22 0-10 0-12-11-5-17 6-5 8-13 16-13z"/></g>
<text x="761" y="723" font-family="Liberation Sans" font-weight="bold" font-size="20" style="fill:#c9c9c9;stroke:none">du</text>
<text x="797" y="723" font-family="Noto Sans CJK SC" font-weight="bold" font-size="28">经验</text>
<text x="695" y="748" font-family="Open Sans" font-size="19" style="stroke-width:.8">jingyan.baidu.com</text></g>
</svg>
</section>
</main>
</body>
</html>
